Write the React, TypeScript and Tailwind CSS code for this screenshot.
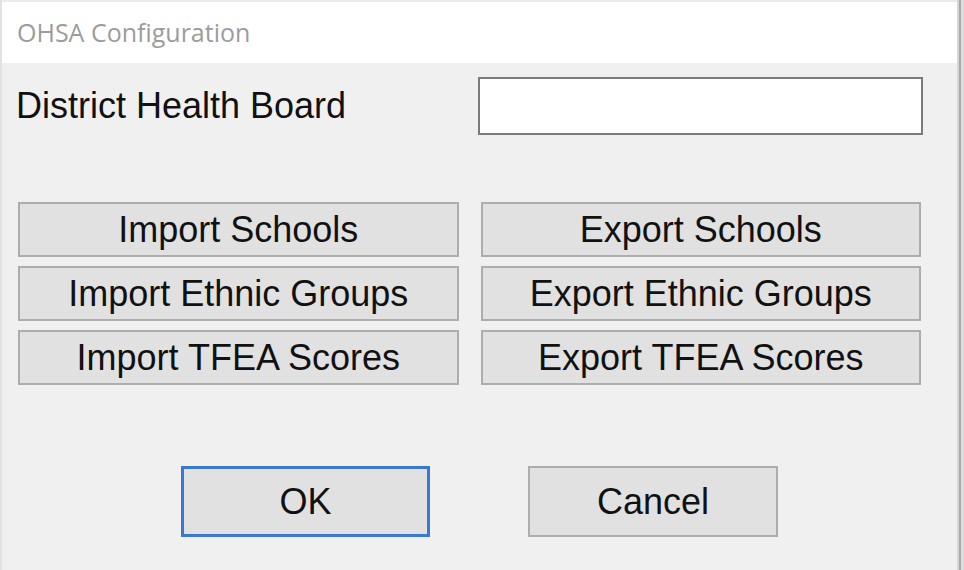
const font = { fontFamily: '"Liberation Sans", Arial, sans-serif' };

function WinButton({ label, className = "" }: { label: string; className?: string }) {
  return (
    <button
      type="button"
      className={`flex items-center justify-center border-2 border-[#adadad] bg-[#e1e1e1] text-[36px] leading-none text-[#111] ${className}`}
    >
      {label}
    </button>
  );
}

const actions = [
  ["Import Schools", "Export Schools"],
  ["Import Ethnic Groups", "Export Ethnic Groups"],
  ["Import TFEA Scores", "Export TFEA Scores"],
];

export default function App() {
  return (
    <div className="flex h-[570px] w-[964px] overflow-hidden bg-[#f0f0f0]" style={font}>
      <div className="w-[2px] bg-[#e2e2e2]" />
      <div className="flex flex-1 flex-col">
        <div className="h-[2px] bg-[#ebebeb]" />
        <div className="flex h-[61px] items-center bg-white pl-[15px]">
          <span
            className="text-[25px] leading-none text-[#9c9c9c]"
            style={{ fontFamily: '"Open Sans", "Liberation Sans", sans-serif' }}
          >
            OHSA Configuration
          </span>
        </div>

        <div className="flex items-center pl-[14px] pt-[14px]">
          <label className="w-[462px] text-[36px] leading-none text-[#111]">District Health Board</label>
          <input className="h-[58px] w-[445px] border-2 border-[#7a7a7a] bg-white outline-none" />
        </div>

        <div className="ml-[16px] mt-[67px] grid w-[903px] grid-cols-2 gap-x-[22px] gap-y-[9px]">
          {actions.flat().map((a) => (
            <WinButton key={a} label={a} className="h-[55px]" />
          ))}
        </div>

        <div className="ml-[179px] mt-[81px] flex gap-[98px]">
          <WinButton label="OK" className="h-[71px] w-[249px] !border-[3px] !border-[#3a78d4]" />
          <WinButton label="Cancel" className="h-[71px] w-[250px]" />
        </div>
      </div>
      <div className="flex w-[7px]">
        <div className="w-[2px] bg-[#d6d6d6]" />
        <div className="w-[2px] bg-[#a9a9a9]" />
        <div className="w-[3px] bg-[#dcdcdc]" />
      </div>
    </div>
  );
}
